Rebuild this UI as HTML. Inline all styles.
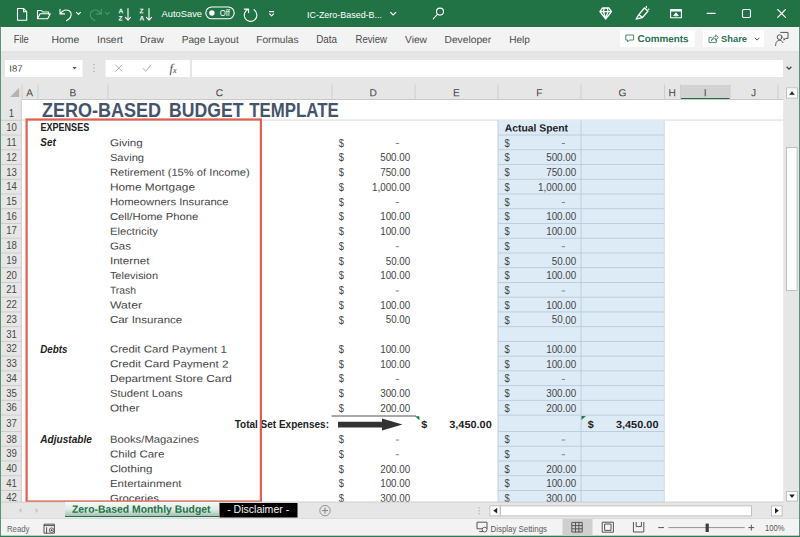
<!DOCTYPE html>
<html lang="en"><head><meta charset="utf-8"><title>Zero-Based Budget Template</title>
<style>
html,body{margin:0;padding:0;}
body{width:800px;height:537px;position:relative;overflow:hidden;background:#e6e6e6;}
.t{position:absolute;white-space:nowrap;margin:0;padding:0;}
.r{position:absolute;box-sizing:border-box;}
svg{position:absolute;overflow:visible;font-family:'Liberation Sans',sans-serif;}
text{white-space:pre;}
</style></head><body>
<svg style="left:0;top:0" width="800" height="537"><rect x="0" y="0" width="800" height="537" fill="#e6e6e6"/><rect x="0" y="0" width="800" height="27" fill="#217346"/><rect x="0" y="27" width="800" height="24.5" fill="#f3f3f3"/><rect x="0" y="51.5" width="800" height="1" fill="#dedede"/><rect x="5" y="60" width="77.5" height="17" fill="#fff"/><rect x="105.5" y="60" width="84.4" height="17" fill="#fff"/><rect x="192" y="60" width="591" height="17" fill="#fff"/><rect x="21.4" y="99.5" width="762.1" height="402.5" fill="#fff"/><rect x="1" y="83" width="782" height="16.5" fill="#e6e6e6"/><rect x="680.5" y="85" width="49.5" height="14.5" fill="#d2d2d2"/><rect x="680.5" y="98" width="49.5" height="1.6" fill="#217346"/><rect x="21.5" y="84.5" width="1" height="14.5" fill="#cdcdcd"/><rect x="37.5" y="84.5" width="1" height="14.5" fill="#cdcdcd"/><rect x="107.5" y="84.5" width="1" height="14.5" fill="#cdcdcd"/><rect x="331.5" y="84.5" width="1" height="14.5" fill="#cdcdcd"/><rect x="414.5" y="84.5" width="1" height="14.5" fill="#cdcdcd"/><rect x="497.5" y="84.5" width="1" height="14.5" fill="#cdcdcd"/><rect x="580.5" y="84.5" width="1" height="14.5" fill="#cdcdcd"/><rect x="664" y="84.5" width="1" height="14.5" fill="#cdcdcd"/><rect x="680" y="84.5" width="1" height="14.5" fill="#cdcdcd"/><rect x="729.5" y="84.5" width="1" height="14.5" fill="#cdcdcd"/><rect x="777.5" y="84.5" width="1" height="14.5" fill="#cdcdcd"/><rect x="22" y="99" width="761.5" height="1" fill="#c9c9c9"/></svg>
<svg style="left:8px;top:86px" width="12" height="12"><polygon points="11.2,1.8 11.2,11 2,11" fill="#b4b4b4"/></svg>
<svg style="left:0;top:0" width="800" height="537"><text x="26.3" y="96.15" font-size="10.2" fill="#444" transform="matrix(1 .0005 0 1 0 -0.01)">A</text><text x="69.6" y="96.15" font-size="10.2" fill="#444" transform="matrix(1 .0005 0 1 0 -0.04)">B</text><text x="215.82" y="96.15" font-size="10.2" fill="#444" transform="matrix(1 .0005 0 1 0 -0.11)">C</text><text x="369.62" y="96.15" font-size="10.2" fill="#444" transform="matrix(1 .0005 0 1 0 -0.19)">D</text><text x="453.1" y="96.15" font-size="10.2" fill="#444" transform="matrix(1 .0005 0 1 0 -0.23)">E</text><text x="536.38" y="96.15" font-size="10.2" fill="#444" transform="matrix(1 .0005 0 1 0 -0.27)">F</text><text x="618.53" y="96.15" font-size="10.2" fill="#444" transform="matrix(1 .0005 0 1 0 -0.31)">G</text><text x="668.62" y="96.15" font-size="10.2" fill="#444" transform="matrix(1 .0005 0 1 0 -0.34)">H</text><text x="703.78" y="96.15" font-size="10.2" fill="#444" transform="matrix(1 .0005 0 1 0 -0.35)">I</text><text x="750.95" y="96.15" font-size="10.2" fill="#444" transform="matrix(1 .0005 0 1 0 -0.38)">J</text><rect x="22" y="119.6" width="761.5" height="0.9" fill="#d4d4d4"/><rect x="498" y="120.3" width="166.5" height="381.7" fill="#ddebf7"/><rect x="497.6" y="120.3" width="0.9" height="381.7" fill="#bccad9"/><rect x="580.6" y="120.3" width="0.9" height="381.7" fill="#bccad9"/><rect x="663.8" y="120.3" width="0.9" height="381.7" fill="#d0dae4"/><rect x="498" y="134.59" width="166.5" height="0.9" fill="#bccad9"/><rect x="498" y="149.33" width="166.5" height="0.9" fill="#bccad9"/><rect x="498" y="164.07" width="166.5" height="0.9" fill="#bccad9"/><rect x="498" y="178.81" width="166.5" height="0.9" fill="#bccad9"/><rect x="498" y="193.55" width="166.5" height="0.9" fill="#bccad9"/><rect x="498" y="208.29" width="166.5" height="0.9" fill="#bccad9"/><rect x="498" y="223.03" width="166.5" height="0.9" fill="#bccad9"/><rect x="498" y="237.77" width="166.5" height="0.9" fill="#bccad9"/><rect x="498" y="252.51" width="166.5" height="0.9" fill="#bccad9"/><rect x="498" y="267.25" width="166.5" height="0.9" fill="#bccad9"/><rect x="498" y="281.99" width="166.5" height="0.9" fill="#bccad9"/><rect x="498" y="296.73" width="166.5" height="0.9" fill="#bccad9"/><rect x="498" y="311.47" width="166.5" height="0.9" fill="#bccad9"/><rect x="498" y="326.21" width="166.5" height="0.9" fill="#bccad9"/><rect x="498" y="340.95" width="166.5" height="0.9" fill="#bccad9"/><rect x="498" y="355.69" width="166.5" height="0.9" fill="#bccad9"/><rect x="498" y="370.43" width="166.5" height="0.9" fill="#bccad9"/><rect x="498" y="385.17" width="166.5" height="0.9" fill="#bccad9"/><rect x="498" y="399.91" width="166.5" height="0.9" fill="#bccad9"/><rect x="498" y="414.65" width="166.5" height="0.9" fill="#bccad9"/><rect x="498" y="431.05" width="166.5" height="0.9" fill="#bccad9"/><rect x="498" y="445.79" width="166.5" height="0.9" fill="#bccad9"/><rect x="498" y="460.53" width="166.5" height="0.9" fill="#bccad9"/><rect x="498" y="475.27" width="166.5" height="0.9" fill="#bccad9"/><rect x="498" y="490.01" width="166.5" height="0.9" fill="#bccad9"/><rect x="1" y="99.5" width="20.4" height="402.5" fill="#e6e6e6"/><rect x="20.8" y="99.5" width="0.9" height="402.5" fill="#c9c9c9"/><rect x="1" y="119.8" width="20.4" height="1" fill="#cdcdcd"/><rect x="1" y="134.54" width="20.4" height="1" fill="#cdcdcd"/><rect x="1" y="149.28" width="20.4" height="1" fill="#cdcdcd"/><rect x="1" y="164.02" width="20.4" height="1" fill="#cdcdcd"/><rect x="1" y="178.76" width="20.4" height="1" fill="#cdcdcd"/><rect x="1" y="193.5" width="20.4" height="1" fill="#cdcdcd"/><rect x="1" y="208.24" width="20.4" height="1" fill="#cdcdcd"/><rect x="1" y="222.98" width="20.4" height="1" fill="#cdcdcd"/><rect x="1" y="237.72" width="20.4" height="1" fill="#cdcdcd"/><rect x="1" y="252.46" width="20.4" height="1" fill="#cdcdcd"/><rect x="1" y="267.2" width="20.4" height="1" fill="#cdcdcd"/><rect x="1" y="281.94" width="20.4" height="1" fill="#cdcdcd"/><rect x="1" y="296.68" width="20.4" height="1" fill="#cdcdcd"/><rect x="1" y="311.42" width="20.4" height="1" fill="#cdcdcd"/><rect x="1" y="326.16" width="20.4" height="1" fill="#cdcdcd"/><rect x="1" y="340.9" width="20.4" height="1" fill="#cdcdcd"/><rect x="1" y="355.64" width="20.4" height="1" fill="#cdcdcd"/><rect x="1" y="370.38" width="20.4" height="1" fill="#cdcdcd"/><rect x="1" y="385.12" width="20.4" height="1" fill="#cdcdcd"/><rect x="1" y="399.86" width="20.4" height="1" fill="#cdcdcd"/><rect x="1" y="414.6" width="20.4" height="1" fill="#cdcdcd"/><rect x="1" y="431" width="20.4" height="1" fill="#cdcdcd"/><rect x="1" y="445.74" width="20.4" height="1" fill="#cdcdcd"/><rect x="1" y="460.48" width="20.4" height="1" fill="#cdcdcd"/><rect x="1" y="475.22" width="20.4" height="1" fill="#cdcdcd"/><rect x="1" y="489.96" width="20.4" height="1" fill="#cdcdcd"/><text x="8.83" y="116.65" font-size="10.2" fill="#484848" textLength="5.33" lengthAdjust="spacingAndGlyphs" transform="matrix(1 .0005 0 1 0 -0.01)">1</text><text x="6.17" y="131.32" font-size="10.2" fill="#484848" textLength="10.67" lengthAdjust="spacingAndGlyphs" transform="matrix(1 .0005 0 1 0 -0.01)">10</text><text x="6.52" y="146.06" font-size="10.2" fill="#484848" textLength="9.95" lengthAdjust="spacingAndGlyphs" transform="matrix(1 .0005 0 1 0 -0.01)">11</text><text x="6.17" y="160.8" font-size="10.2" fill="#484848" textLength="10.67" lengthAdjust="spacingAndGlyphs" transform="matrix(1 .0005 0 1 0 -0.01)">12</text><text x="6.17" y="175.54" font-size="10.2" fill="#484848" textLength="10.67" lengthAdjust="spacingAndGlyphs" transform="matrix(1 .0005 0 1 0 -0.01)">13</text><text x="6.17" y="190.28" font-size="10.2" fill="#484848" textLength="10.67" lengthAdjust="spacingAndGlyphs" transform="matrix(1 .0005 0 1 0 -0.01)">14</text><text x="6.17" y="205.02" font-size="10.2" fill="#484848" textLength="10.67" lengthAdjust="spacingAndGlyphs" transform="matrix(1 .0005 0 1 0 -0.01)">15</text><text x="6.17" y="219.76" font-size="10.2" fill="#484848" textLength="10.67" lengthAdjust="spacingAndGlyphs" transform="matrix(1 .0005 0 1 0 -0.01)">16</text><text x="6.17" y="234.5" font-size="10.2" fill="#484848" textLength="10.67" lengthAdjust="spacingAndGlyphs" transform="matrix(1 .0005 0 1 0 -0.01)">17</text><text x="6.17" y="249.24" font-size="10.2" fill="#484848" textLength="10.67" lengthAdjust="spacingAndGlyphs" transform="matrix(1 .0005 0 1 0 -0.01)">18</text><text x="6.17" y="263.98" font-size="10.2" fill="#484848" textLength="10.67" lengthAdjust="spacingAndGlyphs" transform="matrix(1 .0005 0 1 0 -0.01)">19</text><text x="6.17" y="278.72" font-size="10.2" fill="#484848" textLength="10.67" lengthAdjust="spacingAndGlyphs" transform="matrix(1 .0005 0 1 0 -0.01)">20</text><text x="6.17" y="293.46" font-size="10.2" fill="#484848" textLength="10.67" lengthAdjust="spacingAndGlyphs" transform="matrix(1 .0005 0 1 0 -0.01)">21</text><text x="6.17" y="308.2" font-size="10.2" fill="#484848" textLength="10.67" lengthAdjust="spacingAndGlyphs" transform="matrix(1 .0005 0 1 0 -0.01)">22</text><text x="6.17" y="322.94" font-size="10.2" fill="#484848" textLength="10.67" lengthAdjust="spacingAndGlyphs" transform="matrix(1 .0005 0 1 0 -0.01)">23</text><text x="6.17" y="337.68" font-size="10.2" fill="#484848" textLength="10.67" lengthAdjust="spacingAndGlyphs" transform="matrix(1 .0005 0 1 0 -0.01)">31</text><text x="6.17" y="352.42" font-size="10.2" fill="#484848" textLength="10.67" lengthAdjust="spacingAndGlyphs" transform="matrix(1 .0005 0 1 0 -0.01)">32</text><text x="6.17" y="367.16" font-size="10.2" fill="#484848" textLength="10.67" lengthAdjust="spacingAndGlyphs" transform="matrix(1 .0005 0 1 0 -0.01)">33</text><text x="6.17" y="381.9" font-size="10.2" fill="#484848" textLength="10.67" lengthAdjust="spacingAndGlyphs" transform="matrix(1 .0005 0 1 0 -0.01)">34</text><text x="6.17" y="396.64" font-size="10.2" fill="#484848" textLength="10.67" lengthAdjust="spacingAndGlyphs" transform="matrix(1 .0005 0 1 0 -0.01)">35</text><text x="6.17" y="411.38" font-size="10.2" fill="#484848" textLength="10.67" lengthAdjust="spacingAndGlyphs" transform="matrix(1 .0005 0 1 0 -0.01)">36</text><text x="6.17" y="426.95" font-size="10.2" fill="#484848" textLength="10.67" lengthAdjust="spacingAndGlyphs" transform="matrix(1 .0005 0 1 0 -0.01)">37</text><text x="6.17" y="442.52" font-size="10.2" fill="#484848" textLength="10.67" lengthAdjust="spacingAndGlyphs" transform="matrix(1 .0005 0 1 0 -0.01)">38</text><text x="6.17" y="457.26" font-size="10.2" fill="#484848" textLength="10.67" lengthAdjust="spacingAndGlyphs" transform="matrix(1 .0005 0 1 0 -0.01)">39</text><text x="6.17" y="472" font-size="10.2" fill="#484848" textLength="10.67" lengthAdjust="spacingAndGlyphs" transform="matrix(1 .0005 0 1 0 -0.01)">40</text><text x="6.17" y="486.74" font-size="10.2" fill="#484848" textLength="10.67" lengthAdjust="spacingAndGlyphs" transform="matrix(1 .0005 0 1 0 -0.01)">41</text><text x="6.17" y="501.48" font-size="10.2" fill="#484848" textLength="10.67" lengthAdjust="spacingAndGlyphs" transform="matrix(1 .0005 0 1 0 -0.01)">42</text><text x="42" y="117.42" font-size="21" fill="#44546a" font-weight="bold" textLength="119" lengthAdjust="spacingAndGlyphs" transform="matrix(1 .0005 0 1 0 -0.05)">ZERO-BASED</text><text x="169" y="117.42" font-size="21" fill="#44546a" font-weight="bold" textLength="74.4" lengthAdjust="spacingAndGlyphs" transform="matrix(1 .0005 0 1 0 -0.1)">BUDGET</text><text x="249.3" y="117.42" font-size="21" fill="#44546a" font-weight="bold" textLength="89.5" lengthAdjust="spacingAndGlyphs" transform="matrix(1 .0005 0 1 0 -0.15)">TEMPLATE</text><text x="40.5" y="131.06" font-size="10.3" fill="#222" font-weight="bold" textLength="48.7" lengthAdjust="spacingAndGlyphs" transform="matrix(1 .0005 0 1 0 -0.03)">EXPENSES</text><text x="504.8" y="131.56" font-size="10.3" fill="#222" font-weight="bold" textLength="63.2" lengthAdjust="spacingAndGlyphs" transform="matrix(1 .0005 0 1 0 -0.27)">Actual Spent</text><text x="40.3" y="146.3" font-size="10.6" fill="#222" font-weight="bold" font-style="italic" textLength="15.4" lengthAdjust="spacingAndGlyphs" transform="matrix(1 .0005 0 1 0 -0.02)">Set</text><text x="40.3" y="352.66" font-size="10.6" fill="#222" font-weight="bold" font-style="italic" textLength="27.2" lengthAdjust="spacingAndGlyphs" transform="matrix(1 .0005 0 1 0 -0.03)">Debts</text><text x="40.3" y="442.76" font-size="10.6" fill="#222" font-weight="bold" font-style="italic" textLength="51.5" lengthAdjust="spacingAndGlyphs" transform="matrix(1 .0005 0 1 0 -0.03)">Adjustable</text><text x="109.9" y="146.26" font-size="10.2" fill="#464646" textLength="32.9" lengthAdjust="spacingAndGlyphs" transform="matrix(1 .0005 0 1 0 -0.06)">Giving</text><text x="338.7" y="146.64" font-size="10.7" fill="#464646" textLength="5.2" lengthAdjust="spacingAndGlyphs" transform="matrix(1 .0005 0 1 0 -0.17)">$</text><rect x="395.7" y="143.11" width="3.4" height="0.9" fill="#777"/><text x="504.6" y="146.64" font-size="10.7" fill="#464646" textLength="5.2" lengthAdjust="spacingAndGlyphs" transform="matrix(1 .0005 0 1 0 -0.25)">$</text><rect x="561.7" y="143.11" width="3.4" height="0.9" fill="#777"/><text x="109.9" y="161" font-size="10.2" fill="#464646" textLength="34.2" lengthAdjust="spacingAndGlyphs" transform="matrix(1 .0005 0 1 0 -0.06)">Saving</text><text x="338.7" y="161.38" font-size="10.7" fill="#464646" textLength="5.2" lengthAdjust="spacingAndGlyphs" transform="matrix(1 .0005 0 1 0 -0.17)">$</text><text x="380.18" y="161.37" font-size="10.1" fill="#464646" textLength="30.12" lengthAdjust="spacingAndGlyphs" transform="matrix(1 .0005 0 1 0 -0.2)">500.00</text><text x="504.6" y="161.38" font-size="10.7" fill="#464646" textLength="5.2" lengthAdjust="spacingAndGlyphs" transform="matrix(1 .0005 0 1 0 -0.25)">$</text><text x="546.18" y="161.37" font-size="10.1" fill="#464646" textLength="30.12" lengthAdjust="spacingAndGlyphs" transform="matrix(1 .0005 0 1 0 -0.28)">500.00</text><text x="109.9" y="175.74" font-size="10.2" fill="#464646" textLength="139.8" lengthAdjust="spacingAndGlyphs" transform="matrix(1 .0005 0 1 0 -0.09)">Retirement (15% of Income)</text><text x="338.7" y="176.12" font-size="10.7" fill="#464646" textLength="5.2" lengthAdjust="spacingAndGlyphs" transform="matrix(1 .0005 0 1 0 -0.17)">$</text><text x="380.18" y="176.11" font-size="10.1" fill="#464646" textLength="30.12" lengthAdjust="spacingAndGlyphs" transform="matrix(1 .0005 0 1 0 -0.2)">750.00</text><text x="504.6" y="176.12" font-size="10.7" fill="#464646" textLength="5.2" lengthAdjust="spacingAndGlyphs" transform="matrix(1 .0005 0 1 0 -0.25)">$</text><text x="546.18" y="176.11" font-size="10.1" fill="#464646" textLength="30.12" lengthAdjust="spacingAndGlyphs" transform="matrix(1 .0005 0 1 0 -0.28)">750.00</text><text x="109.9" y="190.48" font-size="10.2" fill="#464646" textLength="85.1" lengthAdjust="spacingAndGlyphs" transform="matrix(1 .0005 0 1 0 -0.08)">Home Mortgage</text><text x="338.7" y="190.86" font-size="10.7" fill="#464646" textLength="5.2" lengthAdjust="spacingAndGlyphs" transform="matrix(1 .0005 0 1 0 -0.17)">$</text><text x="371.97" y="190.85" font-size="10.1" fill="#464646" textLength="38.33" lengthAdjust="spacingAndGlyphs" transform="matrix(1 .0005 0 1 0 -0.2)">1,000.00</text><text x="504.6" y="190.86" font-size="10.7" fill="#464646" textLength="5.2" lengthAdjust="spacingAndGlyphs" transform="matrix(1 .0005 0 1 0 -0.25)">$</text><text x="537.97" y="190.85" font-size="10.1" fill="#464646" textLength="38.33" lengthAdjust="spacingAndGlyphs" transform="matrix(1 .0005 0 1 0 -0.28)">1,000.00</text><text x="109.9" y="205.22" font-size="10.2" fill="#464646" textLength="118.6" lengthAdjust="spacingAndGlyphs" transform="matrix(1 .0005 0 1 0 -0.08)">Homeowners Insurance</text><text x="338.7" y="205.6" font-size="10.7" fill="#464646" textLength="5.2" lengthAdjust="spacingAndGlyphs" transform="matrix(1 .0005 0 1 0 -0.17)">$</text><rect x="395.7" y="202.07" width="3.4" height="0.9" fill="#777"/><text x="504.6" y="205.6" font-size="10.7" fill="#464646" textLength="5.2" lengthAdjust="spacingAndGlyphs" transform="matrix(1 .0005 0 1 0 -0.25)">$</text><rect x="561.7" y="202.07" width="3.4" height="0.9" fill="#777"/><text x="109.9" y="219.96" font-size="10.2" fill="#464646" textLength="88.5" lengthAdjust="spacingAndGlyphs" transform="matrix(1 .0005 0 1 0 -0.08)">Cell/Home Phone</text><text x="338.7" y="220.34" font-size="10.7" fill="#464646" textLength="5.2" lengthAdjust="spacingAndGlyphs" transform="matrix(1 .0005 0 1 0 -0.17)">$</text><text x="380.18" y="220.33" font-size="10.1" fill="#464646" textLength="30.12" lengthAdjust="spacingAndGlyphs" transform="matrix(1 .0005 0 1 0 -0.2)">100.00</text><text x="504.6" y="220.34" font-size="10.7" fill="#464646" textLength="5.2" lengthAdjust="spacingAndGlyphs" transform="matrix(1 .0005 0 1 0 -0.25)">$</text><text x="546.18" y="220.33" font-size="10.1" fill="#464646" textLength="30.12" lengthAdjust="spacingAndGlyphs" transform="matrix(1 .0005 0 1 0 -0.28)">100.00</text><text x="109.9" y="234.7" font-size="10.2" fill="#464646" textLength="48.1" lengthAdjust="spacingAndGlyphs" transform="matrix(1 .0005 0 1 0 -0.07)">Electricity</text><text x="338.7" y="235.08" font-size="10.7" fill="#464646" textLength="5.2" lengthAdjust="spacingAndGlyphs" transform="matrix(1 .0005 0 1 0 -0.17)">$</text><text x="380.18" y="235.07" font-size="10.1" fill="#464646" textLength="30.12" lengthAdjust="spacingAndGlyphs" transform="matrix(1 .0005 0 1 0 -0.2)">100.00</text><text x="504.6" y="235.08" font-size="10.7" fill="#464646" textLength="5.2" lengthAdjust="spacingAndGlyphs" transform="matrix(1 .0005 0 1 0 -0.25)">$</text><text x="546.18" y="235.07" font-size="10.1" fill="#464646" textLength="30.12" lengthAdjust="spacingAndGlyphs" transform="matrix(1 .0005 0 1 0 -0.28)">100.00</text><text x="109.9" y="249.44" font-size="10.2" fill="#464646" textLength="21.1" lengthAdjust="spacingAndGlyphs" transform="matrix(1 .0005 0 1 0 -0.06)">Gas</text><text x="338.7" y="249.82" font-size="10.7" fill="#464646" textLength="5.2" lengthAdjust="spacingAndGlyphs" transform="matrix(1 .0005 0 1 0 -0.17)">$</text><rect x="395.7" y="246.29" width="3.4" height="0.9" fill="#777"/><text x="504.6" y="249.82" font-size="10.7" fill="#464646" textLength="5.2" lengthAdjust="spacingAndGlyphs" transform="matrix(1 .0005 0 1 0 -0.25)">$</text><rect x="561.7" y="246.29" width="3.4" height="0.9" fill="#777"/><text x="109.9" y="264.18" font-size="10.2" fill="#464646" textLength="39.6" lengthAdjust="spacingAndGlyphs" transform="matrix(1 .0005 0 1 0 -0.06)">Internet</text><text x="338.7" y="264.56" font-size="10.7" fill="#464646" textLength="5.2" lengthAdjust="spacingAndGlyphs" transform="matrix(1 .0005 0 1 0 -0.17)">$</text><text x="385.66" y="264.55" font-size="10.1" fill="#464646" textLength="24.64" lengthAdjust="spacingAndGlyphs" transform="matrix(1 .0005 0 1 0 -0.2)">50.00</text><text x="504.6" y="264.56" font-size="10.7" fill="#464646" textLength="5.2" lengthAdjust="spacingAndGlyphs" transform="matrix(1 .0005 0 1 0 -0.25)">$</text><text x="551.66" y="264.55" font-size="10.1" fill="#464646" textLength="24.64" lengthAdjust="spacingAndGlyphs" transform="matrix(1 .0005 0 1 0 -0.28)">50.00</text><text x="109.9" y="278.92" font-size="10.2" fill="#464646" textLength="48.1" lengthAdjust="spacingAndGlyphs" transform="matrix(1 .0005 0 1 0 -0.07)">Television</text><text x="338.7" y="279.3" font-size="10.7" fill="#464646" textLength="5.2" lengthAdjust="spacingAndGlyphs" transform="matrix(1 .0005 0 1 0 -0.17)">$</text><text x="380.18" y="279.29" font-size="10.1" fill="#464646" textLength="30.12" lengthAdjust="spacingAndGlyphs" transform="matrix(1 .0005 0 1 0 -0.2)">100.00</text><text x="504.6" y="279.3" font-size="10.7" fill="#464646" textLength="5.2" lengthAdjust="spacingAndGlyphs" transform="matrix(1 .0005 0 1 0 -0.25)">$</text><text x="546.18" y="279.29" font-size="10.1" fill="#464646" textLength="30.12" lengthAdjust="spacingAndGlyphs" transform="matrix(1 .0005 0 1 0 -0.28)">100.00</text><text x="109.9" y="293.66" font-size="10.2" fill="#464646" textLength="26.1" lengthAdjust="spacingAndGlyphs" transform="matrix(1 .0005 0 1 0 -0.06)">Trash</text><text x="338.7" y="294.04" font-size="10.7" fill="#464646" textLength="5.2" lengthAdjust="spacingAndGlyphs" transform="matrix(1 .0005 0 1 0 -0.17)">$</text><rect x="395.7" y="290.51" width="3.4" height="0.9" fill="#777"/><text x="504.6" y="294.04" font-size="10.7" fill="#464646" textLength="5.2" lengthAdjust="spacingAndGlyphs" transform="matrix(1 .0005 0 1 0 -0.25)">$</text><rect x="561.7" y="290.51" width="3.4" height="0.9" fill="#777"/><text x="109.9" y="308.4" font-size="10.2" fill="#464646" textLength="32.1" lengthAdjust="spacingAndGlyphs" transform="matrix(1 .0005 0 1 0 -0.06)">Water</text><text x="338.7" y="308.78" font-size="10.7" fill="#464646" textLength="5.2" lengthAdjust="spacingAndGlyphs" transform="matrix(1 .0005 0 1 0 -0.17)">$</text><text x="380.18" y="308.77" font-size="10.1" fill="#464646" textLength="30.12" lengthAdjust="spacingAndGlyphs" transform="matrix(1 .0005 0 1 0 -0.2)">100.00</text><text x="504.6" y="308.78" font-size="10.7" fill="#464646" textLength="5.2" lengthAdjust="spacingAndGlyphs" transform="matrix(1 .0005 0 1 0 -0.25)">$</text><text x="546.18" y="308.77" font-size="10.1" fill="#464646" textLength="30.12" lengthAdjust="spacingAndGlyphs" transform="matrix(1 .0005 0 1 0 -0.28)">100.00</text><text x="109.9" y="323.14" font-size="10.2" fill="#464646" textLength="72.4" lengthAdjust="spacingAndGlyphs" transform="matrix(1 .0005 0 1 0 -0.07)">Car Insurance</text><text x="338.7" y="323.52" font-size="10.7" fill="#464646" textLength="5.2" lengthAdjust="spacingAndGlyphs" transform="matrix(1 .0005 0 1 0 -0.17)">$</text><text x="385.66" y="323.51" font-size="10.1" fill="#464646" textLength="24.64" lengthAdjust="spacingAndGlyphs" transform="matrix(1 .0005 0 1 0 -0.2)">50.00</text><text x="504.6" y="323.52" font-size="10.7" fill="#464646" textLength="5.2" lengthAdjust="spacingAndGlyphs" transform="matrix(1 .0005 0 1 0 -0.25)">$</text><text x="551.66" y="323.51" font-size="10.1" fill="#464646" textLength="24.64" lengthAdjust="spacingAndGlyphs" transform="matrix(1 .0005 0 1 0 -0.28)">50.00</text><text x="109.9" y="352.62" font-size="10.2" fill="#464646" textLength="116.9" lengthAdjust="spacingAndGlyphs" transform="matrix(1 .0005 0 1 0 -0.08)">Credit Card Payment 1</text><text x="338.7" y="353" font-size="10.7" fill="#464646" textLength="5.2" lengthAdjust="spacingAndGlyphs" transform="matrix(1 .0005 0 1 0 -0.17)">$</text><text x="380.18" y="352.99" font-size="10.1" fill="#464646" textLength="30.12" lengthAdjust="spacingAndGlyphs" transform="matrix(1 .0005 0 1 0 -0.2)">100.00</text><text x="504.6" y="353" font-size="10.7" fill="#464646" textLength="5.2" lengthAdjust="spacingAndGlyphs" transform="matrix(1 .0005 0 1 0 -0.25)">$</text><text x="546.18" y="352.99" font-size="10.1" fill="#464646" textLength="30.12" lengthAdjust="spacingAndGlyphs" transform="matrix(1 .0005 0 1 0 -0.28)">100.00</text><text x="109.9" y="367.36" font-size="10.2" fill="#464646" textLength="118.6" lengthAdjust="spacingAndGlyphs" transform="matrix(1 .0005 0 1 0 -0.08)">Credit Card Payment 2</text><text x="338.7" y="367.74" font-size="10.7" fill="#464646" textLength="5.2" lengthAdjust="spacingAndGlyphs" transform="matrix(1 .0005 0 1 0 -0.17)">$</text><text x="380.18" y="367.73" font-size="10.1" fill="#464646" textLength="30.12" lengthAdjust="spacingAndGlyphs" transform="matrix(1 .0005 0 1 0 -0.2)">100.00</text><text x="504.6" y="367.74" font-size="10.7" fill="#464646" textLength="5.2" lengthAdjust="spacingAndGlyphs" transform="matrix(1 .0005 0 1 0 -0.25)">$</text><text x="546.18" y="367.73" font-size="10.1" fill="#464646" textLength="30.12" lengthAdjust="spacingAndGlyphs" transform="matrix(1 .0005 0 1 0 -0.28)">100.00</text><text x="109.9" y="382.1" font-size="10.2" fill="#464646" textLength="122" lengthAdjust="spacingAndGlyphs" transform="matrix(1 .0005 0 1 0 -0.09)">Department Store Card</text><text x="338.7" y="382.48" font-size="10.7" fill="#464646" textLength="5.2" lengthAdjust="spacingAndGlyphs" transform="matrix(1 .0005 0 1 0 -0.17)">$</text><rect x="395.7" y="378.95" width="3.4" height="0.9" fill="#777"/><text x="504.6" y="382.48" font-size="10.7" fill="#464646" textLength="5.2" lengthAdjust="spacingAndGlyphs" transform="matrix(1 .0005 0 1 0 -0.25)">$</text><rect x="561.7" y="378.95" width="3.4" height="0.9" fill="#777"/><text x="109.9" y="396.84" font-size="10.2" fill="#464646" textLength="72.7" lengthAdjust="spacingAndGlyphs" transform="matrix(1 .0005 0 1 0 -0.07)">Student Loans</text><text x="338.7" y="397.22" font-size="10.7" fill="#464646" textLength="5.2" lengthAdjust="spacingAndGlyphs" transform="matrix(1 .0005 0 1 0 -0.17)">$</text><text x="380.18" y="397.21" font-size="10.1" fill="#464646" textLength="30.12" lengthAdjust="spacingAndGlyphs" transform="matrix(1 .0005 0 1 0 -0.2)">300.00</text><text x="504.6" y="397.22" font-size="10.7" fill="#464646" textLength="5.2" lengthAdjust="spacingAndGlyphs" transform="matrix(1 .0005 0 1 0 -0.25)">$</text><text x="546.18" y="397.21" font-size="10.1" fill="#464646" textLength="30.12" lengthAdjust="spacingAndGlyphs" transform="matrix(1 .0005 0 1 0 -0.28)">300.00</text><text x="109.9" y="411.58" font-size="10.2" fill="#464646" textLength="29.5" lengthAdjust="spacingAndGlyphs" transform="matrix(1 .0005 0 1 0 -0.06)">Other</text><text x="338.7" y="411.96" font-size="10.7" fill="#464646" textLength="5.2" lengthAdjust="spacingAndGlyphs" transform="matrix(1 .0005 0 1 0 -0.17)">$</text><text x="380.18" y="411.95" font-size="10.1" fill="#464646" textLength="30.12" lengthAdjust="spacingAndGlyphs" transform="matrix(1 .0005 0 1 0 -0.2)">200.00</text><text x="504.6" y="411.96" font-size="10.7" fill="#464646" textLength="5.2" lengthAdjust="spacingAndGlyphs" transform="matrix(1 .0005 0 1 0 -0.25)">$</text><text x="546.18" y="411.95" font-size="10.1" fill="#464646" textLength="30.12" lengthAdjust="spacingAndGlyphs" transform="matrix(1 .0005 0 1 0 -0.28)">200.00</text><text x="109.9" y="442.72" font-size="10.2" fill="#464646" textLength="89.1" lengthAdjust="spacingAndGlyphs" transform="matrix(1 .0005 0 1 0 -0.08)">Books/Magazines</text><text x="338.7" y="443.1" font-size="10.7" fill="#464646" textLength="5.2" lengthAdjust="spacingAndGlyphs" transform="matrix(1 .0005 0 1 0 -0.17)">$</text><rect x="395.7" y="439.57" width="3.4" height="0.9" fill="#777"/><text x="504.6" y="443.1" font-size="10.7" fill="#464646" textLength="5.2" lengthAdjust="spacingAndGlyphs" transform="matrix(1 .0005 0 1 0 -0.25)">$</text><rect x="561.7" y="439.57" width="3.4" height="0.9" fill="#777"/><text x="109.9" y="457.46" font-size="10.2" fill="#464646" textLength="54.5" lengthAdjust="spacingAndGlyphs" transform="matrix(1 .0005 0 1 0 -0.07)">Child Care</text><text x="338.7" y="457.84" font-size="10.7" fill="#464646" textLength="5.2" lengthAdjust="spacingAndGlyphs" transform="matrix(1 .0005 0 1 0 -0.17)">$</text><rect x="395.7" y="454.31" width="3.4" height="0.9" fill="#777"/><text x="504.6" y="457.84" font-size="10.7" fill="#464646" textLength="5.2" lengthAdjust="spacingAndGlyphs" transform="matrix(1 .0005 0 1 0 -0.25)">$</text><rect x="561.7" y="454.31" width="3.4" height="0.9" fill="#777"/><text x="109.9" y="472.2" font-size="10.2" fill="#464646" textLength="42.6" lengthAdjust="spacingAndGlyphs" transform="matrix(1 .0005 0 1 0 -0.07)">Clothing</text><text x="338.7" y="472.58" font-size="10.7" fill="#464646" textLength="5.2" lengthAdjust="spacingAndGlyphs" transform="matrix(1 .0005 0 1 0 -0.17)">$</text><text x="380.18" y="472.57" font-size="10.1" fill="#464646" textLength="30.12" lengthAdjust="spacingAndGlyphs" transform="matrix(1 .0005 0 1 0 -0.2)">200.00</text><text x="504.6" y="472.58" font-size="10.7" fill="#464646" textLength="5.2" lengthAdjust="spacingAndGlyphs" transform="matrix(1 .0005 0 1 0 -0.25)">$</text><text x="546.18" y="472.57" font-size="10.1" fill="#464646" textLength="30.12" lengthAdjust="spacingAndGlyphs" transform="matrix(1 .0005 0 1 0 -0.28)">200.00</text><text x="109.9" y="486.94" font-size="10.2" fill="#464646" textLength="71.6" lengthAdjust="spacingAndGlyphs" transform="matrix(1 .0005 0 1 0 -0.07)">Entertainment</text><text x="338.7" y="487.32" font-size="10.7" fill="#464646" textLength="5.2" lengthAdjust="spacingAndGlyphs" transform="matrix(1 .0005 0 1 0 -0.17)">$</text><text x="380.18" y="487.31" font-size="10.1" fill="#464646" textLength="30.12" lengthAdjust="spacingAndGlyphs" transform="matrix(1 .0005 0 1 0 -0.2)">100.00</text><text x="504.6" y="487.32" font-size="10.7" fill="#464646" textLength="5.2" lengthAdjust="spacingAndGlyphs" transform="matrix(1 .0005 0 1 0 -0.25)">$</text><text x="546.18" y="487.31" font-size="10.1" fill="#464646" textLength="30.12" lengthAdjust="spacingAndGlyphs" transform="matrix(1 .0005 0 1 0 -0.28)">100.00</text><text x="109.9" y="501.68" font-size="10.2" fill="#464646" textLength="49.1" lengthAdjust="spacingAndGlyphs" transform="matrix(1 .0005 0 1 0 -0.07)">Groceries</text><text x="338.7" y="502.06" font-size="10.7" fill="#464646" textLength="5.2" lengthAdjust="spacingAndGlyphs" transform="matrix(1 .0005 0 1 0 -0.17)">$</text><text x="380.18" y="502.05" font-size="10.1" fill="#464646" textLength="30.12" lengthAdjust="spacingAndGlyphs" transform="matrix(1 .0005 0 1 0 -0.2)">300.00</text><text x="504.6" y="502.06" font-size="10.7" fill="#464646" textLength="5.2" lengthAdjust="spacingAndGlyphs" transform="matrix(1 .0005 0 1 0 -0.25)">$</text><text x="546.18" y="502.05" font-size="10.1" fill="#464646" textLength="30.12" lengthAdjust="spacingAndGlyphs" transform="matrix(1 .0005 0 1 0 -0.28)">300.00</text><text x="234.7" y="428.09" font-size="10.3" fill="#222" font-weight="bold" textLength="94.3" lengthAdjust="spacingAndGlyphs" transform="matrix(1 .0005 0 1 0 -0.14)">Total Set Expenses:</text><text x="421.2" y="428.09" font-size="10.3" fill="#222" font-weight="bold" textLength="6" lengthAdjust="spacingAndGlyphs" transform="matrix(1 .0005 0 1 0 -0.21)">$</text><text x="449.2" y="428.09" font-size="10.3" fill="#222" font-weight="bold" textLength="42.6" lengthAdjust="spacingAndGlyphs" transform="matrix(1 .0005 0 1 0 -0.24)">3,450.00</text><text x="587.8" y="428.09" font-size="10.3" fill="#222" font-weight="bold" textLength="6" lengthAdjust="spacingAndGlyphs" transform="matrix(1 .0005 0 1 0 -0.3)">$</text><text x="615.9" y="428.09" font-size="10.3" fill="#222" font-weight="bold" textLength="42.6" lengthAdjust="spacingAndGlyphs" transform="matrix(1 .0005 0 1 0 -0.32)">3,450.00</text><rect x="331.5" y="415.5" width="84.5" height="1" fill="#555"/></svg>
<svg style="left:0;top:0" width="800" height="537"><polygon points="338,421.8 382,421.8 382,418.6 402.5,424.6 382,430.6 382,427.5 338,427.5" fill="#333"/><polygon points="415,416.3 419.4,416.3 419.4,420.2" fill="#1e7a45"/><polygon points="581.5,416 585.8,416 581.5,420" fill="#1e7a45"/></svg>
<svg style="left:0;top:0" width="800" height="537"><rect x="26.6" y="119.5" width="234.3" height="382" fill="none" stroke="#e0604e" stroke-width="2.2"/><rect x="1" y="502" width="782.5" height="16.3" fill="#e6e6e6"/><rect x="1" y="501.6" width="782.5" height="0.9" fill="#c9c9c9"/><rect x="0" y="518.3" width="800" height="18.7" fill="#f3f3f3"/><rect x="0" y="518" width="800" height="0.8" fill="#d8d8d8"/><rect x="0" y="26.5" width="1" height="510.5" fill="#5c9276"/><rect x="799" y="26.5" width="1" height="510.5" fill="#5c9276"/><rect x="0" y="535.7" width="800" height="1.3" fill="#2f7a55"/><rect x="783.5" y="83" width="15.5" height="435" fill="#e6e6e6"/><rect x="786.4" y="87.9" width="11.2" height="10.2" fill="#fff" stroke="#b5b5b5" stroke-width="0.8"/><rect x="786.4" y="491.4" width="11.2" height="9.7" fill="#fff" stroke="#b5b5b5" stroke-width="0.8"/><rect x="786.4" y="147.4" width="10.7" height="143.2" fill="#fff" stroke="#b5b5b5" stroke-width="0.8"/><rect x="489.9" y="505.9" width="10.2" height="10" fill="#fff" stroke="#b5b5b5" stroke-width="0.8"/><rect x="500.4" y="505.9" width="251.2" height="10" fill="#fff" stroke="#b5b5b5" stroke-width="0.8"/><rect x="771.4" y="505.9" width="10.7" height="10" fill="#fff" stroke="#b5b5b5" stroke-width="0.8"/><rect x="478.5" y="507.3" width="1.2" height="1.2" fill="#b0b0b0"/><rect x="478.5" y="510.2" width="1.2" height="1.2" fill="#b0b0b0"/><rect x="478.5" y="513.1" width="1.2" height="1.2" fill="#b0b0b0"/></svg>
<svg style="left:0;top:0" width="800" height="537"><polygon points="789.2,94.8 794.8,94.8 792,91.2" fill="#222"/><polygon points="789.2,494.5 794.8,494.5 792,498" fill="#222"/><polygon points="497.2,507.8 497.2,513.6 493.4,510.7" fill="#222"/><polygon points="775,507.8 775,513.6 778.8,510.7" fill="#222"/></svg>
<div class="r" style="left:64.5px;top:502.3px;width:154px;height:15px;background:linear-gradient(#f6faf8,#dfeae4 55%,#a3c3b4);border-bottom:1.8px solid #2a6e54;"></div>
<svg style="left:0;top:0" width="800" height="537"><text x="72" y="512.79" font-size="10.6" fill="#217346" font-weight="bold" textLength="138.5" lengthAdjust="spacingAndGlyphs" transform="matrix(1 .0005 0 1 0 -0.07)">Zero-Based Monthly Budget</text><rect x="219.5" y="503" width="78" height="14.5" fill="#000"/><text x="227.2" y="513.34" font-size="11" fill="#f4f4f4" textLength="62" lengthAdjust="spacingAndGlyphs" transform="matrix(1 .0005 0 1 0 -0.13)">- Disclaimer -</text></svg>
<svg style="left:0;top:0" width="800" height="537"><circle cx="325" cy="510.6" r="5.2" fill="none" stroke="#8a8a8a" stroke-width="0.9"/><path d="M322,510.6h6M325,507.6v6" stroke="#7a7a7a" stroke-width="0.9" fill="none"/><polygon points="21.5,508 21.5,513 18.6,510.5" fill="#c4c4c4"/><polygon points="35.5,508 35.5,513 38.4,510.5" fill="#c4c4c4"/></svg>
<svg style="left:0;top:0" width="800" height="537"><text x="7" y="531.95" font-size="8.8" fill="#666" textLength="22.5" lengthAdjust="spacingAndGlyphs" transform="matrix(1 .0005 0 1 0 -0.01)">Ready</text><text x="490.5" y="531.75" font-size="8.8" fill="#5a5a5a" textLength="56.5" lengthAdjust="spacingAndGlyphs" transform="matrix(1 .0005 0 1 0 -0.26)">Display Settings</text><rect x="562.5" y="519" width="30" height="16.5" fill="#cfcfcf"/><text x="13.75" y="43.02" font-size="10.1" fill="#4c4c4c" textLength="15" lengthAdjust="spacingAndGlyphs" transform="matrix(1 .0005 0 1 0 -0.01)">File</text><text x="51.4" y="43.02" font-size="10.1" fill="#4c4c4c" textLength="27.9" lengthAdjust="spacingAndGlyphs" transform="matrix(1 .0005 0 1 0 -0.03)">Home</text><text x="97" y="43.02" font-size="10.1" fill="#4c4c4c" textLength="26" lengthAdjust="spacingAndGlyphs" transform="matrix(1 .0005 0 1 0 -0.06)">Insert</text><text x="140" y="43.02" font-size="10.1" fill="#4c4c4c" textLength="23.8" lengthAdjust="spacingAndGlyphs" transform="matrix(1 .0005 0 1 0 -0.08)">Draw</text><text x="181.7" y="43.02" font-size="10.1" fill="#4c4c4c" textLength="57.1" lengthAdjust="spacingAndGlyphs" transform="matrix(1 .0005 0 1 0 -0.11)">Page Layout</text><text x="256.2" y="43.02" font-size="10.1" fill="#4c4c4c" textLength="42.3" lengthAdjust="spacingAndGlyphs" transform="matrix(1 .0005 0 1 0 -0.14)">Formulas</text><text x="316.2" y="43.02" font-size="10.1" fill="#4c4c4c" textLength="20.8" lengthAdjust="spacingAndGlyphs" transform="matrix(1 .0005 0 1 0 -0.16)">Data</text><text x="355.5" y="43.02" font-size="10.1" fill="#4c4c4c" textLength="31.5" lengthAdjust="spacingAndGlyphs" transform="matrix(1 .0005 0 1 0 -0.19)">Review</text><text x="405" y="43.02" font-size="10.1" fill="#4c4c4c" textLength="22" lengthAdjust="spacingAndGlyphs" transform="matrix(1 .0005 0 1 0 -0.21)">View</text><text x="444.5" y="43.02" font-size="10.1" fill="#4c4c4c" textLength="46.7" lengthAdjust="spacingAndGlyphs" transform="matrix(1 .0005 0 1 0 -0.23)">Developer</text><text x="509.2" y="43.02" font-size="10.1" fill="#4c4c4c" textLength="20.8" lengthAdjust="spacingAndGlyphs" transform="matrix(1 .0005 0 1 0 -0.26)">Help</text><rect x="620" y="30" width="75" height="17" fill="#fff" rx="1.5"/><rect x="703" y="30" width="61" height="17" fill="#fff" rx="1.5"/><text x="637.5" y="42.14" font-size="9.9" fill="#2a7050" font-weight="bold" textLength="51" lengthAdjust="spacingAndGlyphs" transform="matrix(1 .0005 0 1 0 -0.33)">Comments</text><text x="721" y="42.14" font-size="9.9" fill="#2a7050" font-weight="bold" textLength="26" lengthAdjust="spacingAndGlyphs" transform="matrix(1 .0005 0 1 0 -0.37)">Share</text><text x="161.5" y="17.04" font-size="9.6" fill="#fff" textLength="40.5" lengthAdjust="spacingAndGlyphs" transform="matrix(1 .0005 0 1 0 -0.09)">AutoSave</text><text x="219.8" y="15.94" font-size="8.2" fill="#fff" textLength="10.2" lengthAdjust="spacingAndGlyphs" transform="matrix(1 .0005 0 1 0 -0.11)">Off</text><text x="307" y="17.61" font-size="9.8" fill="#fff" textLength="75" lengthAdjust="spacingAndGlyphs" transform="matrix(1 .0005 0 1 0 -0.17)">IC-Zero-Based-B...</text><text x="9.3" y="71.89" font-size="9.2" fill="#444" textLength="13.2" lengthAdjust="spacingAndGlyphs" transform="matrix(1 .0005 0 1 0 -0.01)">I87</text><text x="765" y="531.45" font-size="8.8" fill="#555" textLength="19.5" lengthAdjust="spacingAndGlyphs" transform="matrix(1 .0005 0 1 0 -0.39)">100%</text></svg>
<svg style="left:0;top:0" width="800" height="537"><path d="M17.5,8.5h6l3.2,3.2v8.6h-9.2z M23.5,8.5v3.2h3.2" stroke="#fff" fill="none" stroke-width="1.1" stroke-linejoin="round" stroke-linecap="round"/><path d="M37.5,18.7v-8.2h4l1.2,1.5h5.8v2.2 M37.5,18.7l2.6,-5h10.2l-2.6,5z" stroke="#fff" fill="none" stroke-width="1.1" stroke-linejoin="round" stroke-linecap="round"/><path d="M60,9.3v4.6h4.6 M60.4,13.6c2.2,-3.4 6,-4.6 8.8,-2.8c3,2 2.6,6 -0.6,8.4l-2.2,1.6" stroke="#fff" fill="none" stroke-width="1.1" stroke-linejoin="round" stroke-linecap="round"/><path d="M76.4,12.4l2,2l2,-2" stroke="#fff" fill="none" stroke-width="1.1" stroke-linejoin="round" stroke-linecap="round"/><path d="M101.4,9.3v4.6h-4.6 M101,13.6c-2.2,-3.4 -6,-4.6 -8.8,-2.8c-3,2 -2.6,6 0.6,8.4l2.2,1.6" stroke="#4f9270" fill="none" stroke-width="1.1" stroke-linejoin="round" stroke-linecap="round"/><path d="M105.4,12.4l2,2l2,-2" stroke="#4f9270" fill="none" stroke-width="1.1" stroke-linejoin="round" stroke-linecap="round"/><path d="M128,8.5v11.5 M125.4,17.4l2.6,2.8l2.6,-2.8" stroke="#fff" fill="none" stroke-width="1.1" stroke-linejoin="round" stroke-linecap="round"/><path d="M149,8.5v11.5 M146.4,17.4l2.6,2.8l2.6,-2.8" stroke="#fff" fill="none" stroke-width="1.1" stroke-linejoin="round" stroke-linecap="round"/><circle cx="440" cy="11.6" r="3.5" stroke="#fff" fill="none" stroke-width="1.1" stroke-linejoin="round" stroke-linecap="round"/><path d="M437.4,14.4l-4.2,4.4" stroke="#fff" fill="none" stroke-width="1.1" stroke-linejoin="round" stroke-linecap="round"/><path d="M254,9.8A6.3,6.3 0 1 1 248.55,9.15 M244.3,9.1H248.6V12.6" stroke="#fff" fill="none" stroke-width="1.1" stroke-linejoin="round" stroke-linecap="round"/><path d="M269.5,11.6h4.2 M269.6,13.8l2,2l2,-2" stroke="#fff" fill="none" stroke-width="1.1" stroke-linejoin="round" stroke-linecap="round"/><path d="M390.6,12.4l2.6,2.6l2.6,-2.6" stroke="#fff" fill="none" stroke-width="1.1" stroke-linejoin="round" stroke-linecap="round"/><rect x="205.8" y="7" width="28.4" height="11.8" rx="5.9" stroke="#fff" fill="none" stroke-width="1.1" stroke-linejoin="round" stroke-linecap="round"/><circle cx="211.9" cy="13" r="2.7" fill="#fff"/><path d="M602.6,8h6.2l2.7,3.6l-5.8,7.4l-5.8,-7.4z M600.2,11.6h11 M604.2,8.2l-0.8,3.4l2.3,6.6 M607.2,8.2l0.8,3.4l-2.3,6.6" stroke="#fff" fill="none" stroke-width="1.3" stroke-linejoin="round" stroke-linecap="round"/><path d="M638.8,14.6l5.6,-6.6l3.6,3l-5.6,6.6z M638.8,14.6l-2.8,4.4l6.4,-1.4 M646.4,6.4v1 M648.6,9.2h0.2" stroke="#fff" fill="none" stroke-width="1.3" stroke-linejoin="round" stroke-linecap="round"/><rect x="670.6" y="9.6" width="10.8" height="8.2" stroke="#fff" fill="none" stroke-width="1.1" stroke-linejoin="round" stroke-linecap="round"/><path d="M670.6,10.6h10.8" stroke="#fff" stroke-width="1.8"/><path d="M673.6,15.6h4.8l-2.4,-2.8z M676,15.6v1" stroke="#fff" stroke-width="0.8" fill="#fff" stroke-linejoin="round"/><path d="M707.2,13.4h8" stroke="#fff" fill="none" stroke-width="1.1" stroke-linejoin="round" stroke-linecap="round"/><rect x="742.5" y="9.5" width="8" height="8" rx="1.2" stroke="#fff" fill="none" stroke-width="1.1" stroke-linejoin="round" stroke-linecap="round"/><path d="M777.7,9.5l7.8,7.8 M785.5,9.5l-7.8,7.8" stroke="#fff" fill="none" stroke-width="1.1" stroke-linejoin="round" stroke-linecap="round"/><path d="M626.2,35h7.4v5h-4.2l-1.8,1.9v-1.9h-1.4z" stroke="#3b7d5d" fill="none" stroke-width="0.9" stroke-linejoin="round" stroke-linecap="round"/><path d="M711.4,37.4h-2.4v5h7.6v-2.2 M711.6,40.4c0.6,-2.6 2,-3.8 4,-3.8v-1.8l2.6,2.8l-2.6,2.8v-1.8c-1.6,0 -3,0.4 -4,1.8z" stroke="#3b7d5d" fill="none" stroke-width="0.9" stroke-linejoin="round" stroke-linecap="round"/><path d="M755,38l2.1,2.1l2.1,-2.1" stroke="#555" fill="none" stroke-width="1" stroke-linejoin="round" stroke-linecap="round"/><circle cx="779.6" cy="37.2" r="2.4" stroke="#555" fill="none" stroke-width="1" stroke-linejoin="round" stroke-linecap="round"/><path d="M775.6,45.6c0,-3.6 1.6,-5.2 4,-5.2c1.6,0 2.8,0.8 3.4,2.2 M780.6,32.4h7.4v6h-2.4l-1.6,1.8v-1.8" stroke="#555" fill="none" stroke-width="1" stroke-linejoin="round" stroke-linecap="round"/><polygon points="72.6,67.1 76.6,67.1 74.6,69.4" fill="#555"/><rect x="93.4" y="63.99999999999999" width="1.2" height="1.2" fill="#aaa"/><rect x="93.4" y="67.4" width="1.2" height="1.2" fill="#aaa"/><rect x="93.4" y="70.80000000000001" width="1.2" height="1.2" fill="#aaa"/><path d="M115.6,65l6.4,6.4 M122,65l-6.4,6.4" stroke="#b0b0b0" fill="none" stroke-width="1" stroke-linecap="round" stroke-linejoin="round"/><path d="M143.4,68.6l2.4,2.8l4.8,-6.2" stroke="#b0b0b0" fill="none" stroke-width="1" stroke-linecap="round" stroke-linejoin="round"/><path d="M786.6,66.8l2.4,2.4l2.4,-2.4" stroke="#444" fill="none" stroke-width="1.3"/><rect x="44.4" y="524.2" width="10" height="9" stroke="#555" fill="none" stroke-width="1" stroke-linejoin="round" stroke-linecap="round"/><path d="M44.4,525.6h10 M46.6,527.6v5.4" stroke="#555" fill="none" stroke-width="1" stroke-linejoin="round" stroke-linecap="round"/><circle cx="51.6" cy="530.2" r="2.3" fill="#f3f3f3" stroke="#555" stroke-width="0.9"/><circle cx="51.6" cy="530.2" r="1" fill="#444"/><rect x="477.4" y="522.2" width="9.6" height="6.6" stroke="#555" fill="none" stroke-width="1" stroke-linejoin="round" stroke-linecap="round"/><circle cx="484.6" cy="529.6" r="2.4" fill="#f3f3f3" stroke="#555" stroke-width="0.9"/><path d="M479.6,531.6h3" stroke="#555" fill="none" stroke-width="1" stroke-linejoin="round" stroke-linecap="round"/><rect x="572.2" y="522.4" width="10" height="9.6" stroke="#555" fill="none" stroke-width="1" stroke-linejoin="round" stroke-linecap="round"/><path d="M572.2,525.6h10 M572.2,528.8h10 M575.5,522.4v9.6 M578.9,522.4v9.6" stroke="#555" fill="none" stroke-width="1" stroke-linejoin="round" stroke-linecap="round"/><rect x="602.6" y="522.2" width="10.8" height="10" stroke="#555" fill="none" stroke-width="1" stroke-linejoin="round" stroke-linecap="round"/><rect x="605" y="524" width="6" height="6.4" stroke="#555" fill="none" stroke-width="1" stroke-linejoin="round" stroke-linecap="round"/><path d="M633.4,522.4v9.6h10.4v-9.6 M636.2,522.4v4.2h5.2v-4.2" stroke="#555" fill="none" stroke-width="1" stroke-linejoin="round" stroke-linecap="round"/><path d="M658.6,527.6h5" stroke="#555" fill="none" stroke-width="1" stroke-linejoin="round" stroke-linecap="round"/><path d="M668.4,527.6h76.4" stroke="#8a8a8a" stroke-width="0.9"/><rect x="705.6" y="523.6" width="3.2" height="8.4" fill="#3c3c3c"/><path d="M748.8,527.6h5 M751.3,525.1v5" stroke="#555" fill="none" stroke-width="1" stroke-linejoin="round" stroke-linecap="round"/></svg>
<svg style="left:0;top:0" width="800" height="537"><text x="169.6" y="72.4" font-size="12.5" font-style="italic" font-family="Liberation Serif, serif" fill="#4a4a4a" transform="matrix(1 .0005 0 1 0 -0.09)">f<tspan font-size="9" dy="0.6" dx="-0.4">x</tspan></text><text x="118.4" y="13.36" font-size="6.6" fill="#fff" font-weight="bold" transform="matrix(1 .0005 0 1 0 -0.06)">A</text><text x="118.4" y="20.56" font-size="6.6" fill="#fff" font-weight="bold" transform="matrix(1 .0005 0 1 0 -0.06)">Z</text><text x="139.4" y="13.36" font-size="6.6" fill="#fff" font-weight="bold" transform="matrix(1 .0005 0 1 0 -0.07)">Z</text><text x="139.4" y="20.56" font-size="6.6" fill="#fff" font-weight="bold" transform="matrix(1 .0005 0 1 0 -0.07)">A</text></svg>
</body></html>
